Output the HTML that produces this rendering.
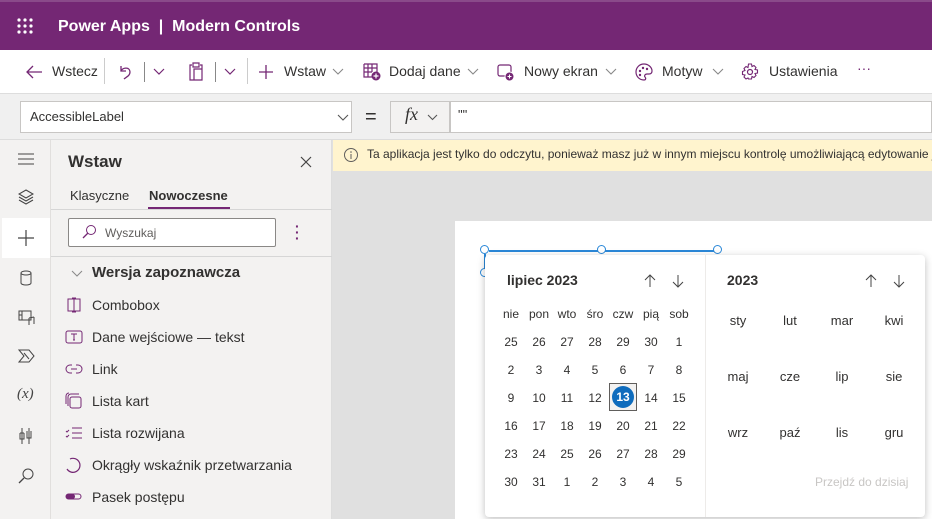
<!DOCTYPE html>
<html><head><meta charset="utf-8"><style>
*{box-sizing:border-box;margin:0;padding:0}
body{width:932px;height:519px;overflow:hidden;font-family:"Segoe UI","Liberation Sans",sans-serif;background:#e0e0e0;position:relative;color:#323130}
.abs{position:absolute}
.hdr{left:0;top:0;width:932px;height:50px;background:#742774;color:#fff;border-top:2px solid #8a4a8a}
.tb{left:0;top:50px;width:932px;height:44px;background:#fff;border-bottom:1px solid #ddd;font-size:14px}
.tb span{position:absolute;top:13px;white-space:nowrap}
.fb{left:0;top:94px;width:932px;height:46px;background:#f0f0f0;border-bottom:1px solid #ddd}
.rail{left:0;top:140px;width:51px;height:379px;background:#f3f2f1;border-right:1px solid #e1dfdd}
.panel{left:51px;top:140px;width:281px;height:379px;background:#f3f2f1;border-right:1px solid #ddd}
.item{position:absolute;left:41px;font-size:14px;color:#323130}
.warn{left:333px;top:140px;width:599px;height:31px;background:#fff4ce;font-size:12px;color:#323130}
.pop{left:485px;top:255px;width:440px;height:262px;background:#fff;border-radius:4px;box-shadow:0 2px 8px rgba(0,0,0,.25)}
.g{position:absolute;font-size:12px;text-align:center;width:28px;color:#323130}
.m{position:absolute;font-size:13px;text-align:center;width:40px;color:#323130}
.h{position:absolute;width:9px;height:9px;border:1.5px solid #2b88d8;border-radius:50%;background:#fff}
svg{position:absolute}
</style></head><body>
<div class="abs hdr">
<svg style="left:17px;top:16px" width="16" height="16"><g fill="#fff"><circle cx="2" cy="2" r="1.6"/><circle cx="8" cy="2" r="1.6"/><circle cx="14" cy="2" r="1.6"/><circle cx="2" cy="8" r="1.6"/><circle cx="8" cy="8" r="1.6"/><circle cx="14" cy="8" r="1.6"/><circle cx="2" cy="14" r="1.6"/><circle cx="8" cy="14" r="1.6"/><circle cx="14" cy="14" r="1.6"/></g></svg>
<div class="abs" style="left:58px;top:16px;font-size:16px;font-weight:bold">Power Apps &nbsp;|&nbsp; Modern Controls</div>
</div>
<div class="abs tb">
<svg style="left:25px;top:14px" width="18" height="16"><path d="M17 8H2M8 2L2 8l6 6" stroke="#742774" stroke-width="1.3" fill="none"/></svg>
<span style="left:52px">Wstecz</span>
<div class="abs" style="left:104px;top:8px;width:1px;height:26px;background:#ccc"></div>
<svg style="left:117px;top:14px" width="16" height="16"><path d="M4 2v5h5M4 7c2-4 9-4 9 1 0 4-4 5-6 7" stroke="#742774" stroke-width="1.3" fill="none"/></svg>
<div class="abs" style="left:144px;top:12px;width:1px;height:20px;background:#888"></div>
<svg style="left:153px;top:18px" width="12" height="8"><path d="M1 1l5 5 5-5" stroke="#742774" stroke-width="1.2" fill="none"/></svg>
<svg style="left:188px;top:12px" width="16" height="20"><path d="M4 3H2v15h12V3h-2M5 1h6v4H5zM6 7h8v11H6z" stroke="#742774" stroke-width="1.2" fill="none"/></svg>
<div class="abs" style="left:215px;top:12px;width:1px;height:20px;background:#888"></div>
<svg style="left:224px;top:18px" width="12" height="8"><path d="M1 1l5 5 5-5" stroke="#742774" stroke-width="1.2" fill="none"/></svg>
<div class="abs" style="left:247px;top:8px;width:1px;height:26px;background:#ccc"></div>
<svg style="left:258px;top:14px" width="16" height="16"><path d="M8 1v14M1 8h14" stroke="#742774" stroke-width="1.3"/></svg>
<span style="left:284px">Wstaw</span>
<svg style="left:332px;top:18px" width="12" height="8"><path d="M1 1l5 5 5-5" stroke="#888" stroke-width="1.1" fill="none"/></svg>
<svg style="left:363px;top:13px" width="18" height="18"><path d="M1 1h13v8M1 1v13h8M1 5h13M1 9h8M5 1v13M9 1v8" stroke="#742774" stroke-width="1.2" fill="none"/><circle cx="13" cy="13" r="4.5" fill="#742774"/><path d="M13 10.5v5M10.5 13h5" stroke="#fff" stroke-width="1.2"/></svg>
<span style="left:389px">Dodaj dane</span>
<svg style="left:467px;top:18px" width="12" height="8"><path d="M1 1l5 5 5-5" stroke="#888" stroke-width="1.1" fill="none"/></svg>
<svg style="left:497px;top:14px" width="18" height="18"><rect x="1" y="1" width="13" height="11" rx="2" stroke="#742774" stroke-width="1.2" fill="none"/><circle cx="12.5" cy="12.5" r="4.5" fill="#742774" stroke="#fff" stroke-width="1"/><path d="M12.5 10.5v4M10.5 12.5h4" stroke="#fff" stroke-width="1.1"/></svg>
<span style="left:524px">Nowy ekran</span>
<svg style="left:605px;top:18px" width="12" height="8"><path d="M1 1l5 5 5-5" stroke="#888" stroke-width="1.1" fill="none"/></svg>
<svg style="left:635px;top:13px" width="18" height="18"><path d="M9 1C4 1 1 5 1 9s3 8 8 8c2 0 2-2 1-3s0-3 2-3h2c2 0 3-1 3-3 0-4-4-7-8-7z" stroke="#742774" stroke-width="1.2" fill="none"/><circle cx="5" cy="8" r="1.2" fill="#742774"/><circle cx="8" cy="5" r="1.2" fill="#742774"/><circle cx="12" cy="6" r="1.2" fill="#742774"/><circle cx="5" cy="12" r="1.2" fill="#742774"/></svg>
<span style="left:662px">Motyw</span>
<svg style="left:712px;top:18px" width="12" height="8"><path d="M1 1l5 5 5-5" stroke="#888" stroke-width="1.1" fill="none"/></svg>
<svg style="left:741px;top:13px" width="18" height="18"><circle cx="9" cy="9" r="2.5" stroke="#742774" stroke-width="1.2" fill="none"/><path d="M7.5 1h3l.5 2.5 2-1 2 2-1 2 2.5.5v3l-2.5.5 1 2-2 2-2-1-.5 2.5h-3L7 15l-2 1-2-2 1-2-2.5-.5v-3L4 7.5 3 5.5l2-2 2 1z" stroke="#742774" stroke-width="1.1" fill="none"/></svg>
<span style="left:769px">Ustawienia</span>
<span style="left:857px;top:10px;color:#742774">···</span>
</div>
<div class="abs fb">
<div class="abs" style="left:20px;top:7px;width:332px;height:32px;background:#fff;border:1px solid #c8c6c4;font-size:13px;padding:7px 9px">AccessibleLabel</div>
<svg style="left:337px;top:20px" width="12" height="8"><path d="M1 1l5 5 5-5" stroke="#555" stroke-width="1.1" fill="none"/></svg>
<div class="abs" style="left:365px;top:12px;font-size:20px">=</div>
<div class="abs" style="left:390px;top:7px;width:60px;height:32px;background:#f3f2f1;border:1px solid #c8c6c4"></div>
<div class="abs" style="left:405px;top:10px;font-family:'Liberation Serif',serif;font-style:italic;font-size:18px">fx</div>
<svg style="left:427px;top:20px" width="11" height="7"><path d="M1 1l4.5 4.5L10 1" stroke="#555" stroke-width="1.1" fill="none"/></svg>
<div class="abs" style="left:450px;top:7px;width:482px;height:32px;background:#fff;border:1px solid #c8c6c4;font-size:13px;padding:5px 7px">""</div>
</div>
<div class="abs rail">
<svg style="left:18px;top:13px" width="16" height="12"><path d="M0 1h16M0 6h16M0 11h16" stroke="#444" stroke-width="1.1"/></svg>
<svg style="left:18px;top:49px" width="16" height="16"><path d="M8 1l7 4-7 4-7-4zM1 8l7 4 7-4M1 11l7 4 7-4" stroke="#444" stroke-width="1.1" fill="none"/></svg>
<div class="abs" style="left:2px;top:78px;width:48px;height:40px;background:#fff"></div>
<svg style="left:17px;top:89px" width="18" height="18"><path d="M9 1v16M1 9h16" stroke="#444" stroke-width="1.2"/></svg>
<svg style="left:20px;top:130px" width="12" height="16"><ellipse cx="6" cy="3" rx="5" ry="2" stroke="#444" fill="none"/><path d="M1 3v10c0 1 2 2 5 2s5-1 5-2V3" stroke="#444" fill="none"/></svg>
<svg style="left:18px;top:170px" width="18" height="16"><path d="M1 1h12v9H1zM4 1v9M1 5h3" stroke="#444" fill="none"/><path d="M11 8v7M16 7v7M11 8l5-1" stroke="#444" fill="none"/></svg>
<svg style="left:18px;top:209px" width="17" height="15"><path d="M1 1h10l5 6-5 6H1l5-6zM6 4l5 6" stroke="#444" fill="none"/></svg>
<div class="abs" style="left:17px;top:246px;font-family:'Liberation Serif',serif;font-style:italic;font-size:15px;color:#444">(<i>x</i>)</div>
<svg style="left:19px;top:287px" width="14" height="18"><path d="M3 1v16M10 1v16M1 6h4M8 11h4M1 6v6h4V6M8 4v7h4V4" stroke="#444" fill="none"/></svg>
<svg style="left:18px;top:328px" width="16" height="16"><circle cx="10" cy="6" r="5" stroke="#444" fill="none"/><path d="M6 10l-5 5" stroke="#444" stroke-width="1.3"/></svg>
</div>
<div class="abs panel">
<div class="abs" style="left:17px;top:12px;font-size:17px;font-weight:bold;color:#323130">Wstaw</div>
<svg style="left:249px;top:16px" width="12" height="12"><path d="M1 1l10 10M11 1L1 11" stroke="#444" stroke-width="1.2"/></svg>
<div class="abs" style="left:19px;top:48px;font-size:13px">Klasyczne</div>
<div class="abs" style="left:98px;top:48px;font-size:13px;font-weight:bold">Nowoczesne</div>
<div class="abs" style="left:97px;top:67px;width:82px;height:2px;background:#742774"></div>
<div class="abs" style="left:0;top:69px;width:281px;height:1px;background:#d6d6d6"></div>
<div class="abs" style="left:17px;top:78px;width:208px;height:29px;background:#fff;border:1px solid #8a8886;border-radius:2px"></div>
<svg style="left:30px;top:84px" width="16" height="16"><circle cx="10" cy="6" r="4.5" stroke="#742774" fill="none"/><path d="M7 9l-5 5" stroke="#742774" stroke-width="1.3"/></svg>
<div class="abs" style="left:54px;top:86px;font-size:12px;color:#605e5c">Wyszukaj</div>
<div class="abs" style="left:244px;top:83px;color:#742774;font-size:14px;font-weight:bold;line-height:6px">·<br>·<br>·</div>
<div class="abs" style="left:0;top:116px;width:281px;height:1px;background:#d6d6d6"></div>
<svg style="left:20px;top:130px" width="12" height="8"><path d="M1 1l5 5 5-5" stroke="#888" stroke-width="1" fill="none"/></svg>
<div class="abs" style="left:41px;top:124px;font-size:15px;font-weight:bold">Wersja zapoznawcza</div>
<svg style="left:14px;top:157px" width="18" height="16"><path d="M3 2h12v12H3zM9 1v14M7 1h4M7 15h4" stroke="#742774" fill="none"/></svg><div class="item" style="top:157px">Combobox</div>
<svg style="left:14px;top:189px" width="18" height="16"><rect x="1" y="2" width="16" height="12" rx="2" stroke="#742774" fill="none"/><path d="M6 5h6M9 5v6M8 11h2" stroke="#742774" fill="none"/></svg><div class="item" style="top:189px">Dane wejściowe — tekst</div>
<svg style="left:14px;top:221px" width="18" height="16"><path d="M7 4H5a4 4 0 000 8h2M11 4h2a4 4 0 010 8h-2M6 8h6" stroke="#742774" fill="none"/></svg><div class="item" style="top:221px">Link</div>
<svg style="left:14px;top:252px" width="18" height="18"><rect x="5" y="5" width="11" height="11" rx="2" stroke="#742774" fill="none"/><path d="M3 14V5a3 3 0 013-3h8M1 12V4a3 3 0 013-3" stroke="#742774" fill="none"/></svg><div class="item" style="top:253px">Lista kart</div>
<svg style="left:14px;top:285px" width="18" height="16"><path d="M7 3h10M7 8h10M7 13h10M1 6l1 1 2-2M1 11l1 1 2-2" stroke="#742774" fill="none"/></svg><div class="item" style="top:285px">Lista rozwijana</div>
<svg style="left:14px;top:317px" width="18" height="18"><path d="M5 2a7 7 0 11-3 10" stroke="#742774" stroke-width="1.2" fill="none"/></svg><div class="item" style="top:317px">Okrągły wskaźnik przetwarzania</div>
<svg style="left:14px;top:353px" width="18" height="8"><rect x="1" y="1" width="15" height="5" rx="2.5" stroke="#742774" fill="none"/><rect x="1" y="1" width="9" height="5" rx="2.5" fill="#742774"/></svg><div class="item" style="top:349px">Pasek postępu</div>
</div>
<div class="abs warn">
<svg style="left:10px;top:7px" width="16" height="16"><circle cx="8" cy="8" r="6.5" stroke="#605e5c" fill="none"/><path d="M8 7v5" stroke="#605e5c"/><circle cx="8" cy="5" r=".8" fill="#605e5c"/></svg>
<div class="abs" style="left:34px;top:7px;white-space:nowrap">Ta aplikacja jest tylko do odczytu, ponieważ masz już w innym miejscu kontrolę umożliwiającą edytowanie je</div>
</div>
<div class="abs" style="left:455px;top:221px;width:477px;height:298px;background:#fff"></div>
<div class="abs" style="left:489px;top:250px;width:230px;height:1.5px;background:#2b88d8"></div>
<div class="abs" style="left:484px;top:254px;width:1.5px;height:20px;background:#2b88d8"></div>
<div class="h" style="left:480px;top:245px"></div><div class="h" style="left:597px;top:245px"></div><div class="h" style="left:713px;top:245px"></div><div class="h" style="left:480px;top:268px"></div>
<div class="abs pop">
<div class="abs" style="left:220px;top:0;width:1px;height:262px;background:#edebe9"></div>
<div class="abs" style="left:22px;top:17px;font-size:14px;font-weight:bold">lipiec 2023</div>
<svg style="left:159px;top:19px" width="12" height="14"><path d="M6 13V1M1 6l5-5 5 5" stroke="#444" fill="none"/></svg>
<svg style="left:187px;top:19px" width="12" height="14"><path d="M6 1v12M1 8l5 5 5-5" stroke="#444" fill="none"/></svg>
<div class="abs" style="left:242px;top:17px;font-size:14px;font-weight:bold">2023</div>
<svg style="left:380px;top:19px" width="12" height="14"><path d="M6 13V1M1 6l5-5 5 5" stroke="#444" fill="none"/></svg>
<svg style="left:408px;top:19px" width="12" height="14"><path d="M6 1v12M1 8l5 5 5-5" stroke="#444" fill="none"/></svg>
<div class="abs" style="left:124px;top:128px;width:28px;height:28px;border:1px solid #605e5c;background:#f3f2f1"></div>
<div class="abs" style="left:127px;top:131px;width:22px;height:22px;border-radius:50%;background:#0f6cbd;color:#fff;font-size:12px;font-weight:bold;text-align:center;line-height:22px">13</div>
<div class="abs" style="left:330px;top:220px;font-size:12px;color:#c8c6c4">Przejdź do dzisiaj</div>
</div>
<div class="abs" style="left:485px;top:255px">
<div class="g" style="left:12px;top:52px">nie</div><div class="g" style="left:40px;top:52px">pon</div><div class="g" style="left:68px;top:52px">wto</div><div class="g" style="left:96px;top:52px">śro</div><div class="g" style="left:124px;top:52px">czw</div><div class="g" style="left:152px;top:52px">pią</div><div class="g" style="left:180px;top:52px">sob</div>
<div class="g" style="left:12px;top:80px">25</div><div class="g" style="left:40px;top:80px">26</div><div class="g" style="left:68px;top:80px">27</div><div class="g" style="left:96px;top:80px">28</div><div class="g" style="left:124px;top:80px">29</div><div class="g" style="left:152px;top:80px">30</div><div class="g" style="left:180px;top:80px">1</div>
<div class="g" style="left:12px;top:108px">2</div><div class="g" style="left:40px;top:108px">3</div><div class="g" style="left:68px;top:108px">4</div><div class="g" style="left:96px;top:108px">5</div><div class="g" style="left:124px;top:108px">6</div><div class="g" style="left:152px;top:108px">7</div><div class="g" style="left:180px;top:108px">8</div>
<div class="g" style="left:12px;top:136px">9</div><div class="g" style="left:40px;top:136px">10</div><div class="g" style="left:68px;top:136px">11</div><div class="g" style="left:96px;top:136px">12</div><div class="g" style="left:152px;top:136px">14</div><div class="g" style="left:180px;top:136px">15</div>
<div class="g" style="left:12px;top:164px">16</div><div class="g" style="left:40px;top:164px">17</div><div class="g" style="left:68px;top:164px">18</div><div class="g" style="left:96px;top:164px">19</div><div class="g" style="left:124px;top:164px">20</div><div class="g" style="left:152px;top:164px">21</div><div class="g" style="left:180px;top:164px">22</div>
<div class="g" style="left:12px;top:192px">23</div><div class="g" style="left:40px;top:192px">24</div><div class="g" style="left:68px;top:192px">25</div><div class="g" style="left:96px;top:192px">26</div><div class="g" style="left:124px;top:192px">27</div><div class="g" style="left:152px;top:192px">28</div><div class="g" style="left:180px;top:192px">29</div>
<div class="g" style="left:12px;top:220px">30</div><div class="g" style="left:40px;top:220px">31</div><div class="g" style="left:68px;top:220px">1</div><div class="g" style="left:96px;top:220px">2</div><div class="g" style="left:124px;top:220px">3</div><div class="g" style="left:152px;top:220px">4</div><div class="g" style="left:180px;top:220px">5</div>
<div class="m" style="left:233px;top:58px">sty</div><div class="m" style="left:285px;top:58px">lut</div><div class="m" style="left:337px;top:58px">mar</div><div class="m" style="left:389px;top:58px">kwi</div>
<div class="m" style="left:233px;top:114px">maj</div><div class="m" style="left:285px;top:114px">cze</div><div class="m" style="left:337px;top:114px">lip</div><div class="m" style="left:389px;top:114px">sie</div>
<div class="m" style="left:233px;top:170px">wrz</div><div class="m" style="left:285px;top:170px">paź</div><div class="m" style="left:337px;top:170px">lis</div><div class="m" style="left:389px;top:170px">gru</div>
</div>
</body></html>
